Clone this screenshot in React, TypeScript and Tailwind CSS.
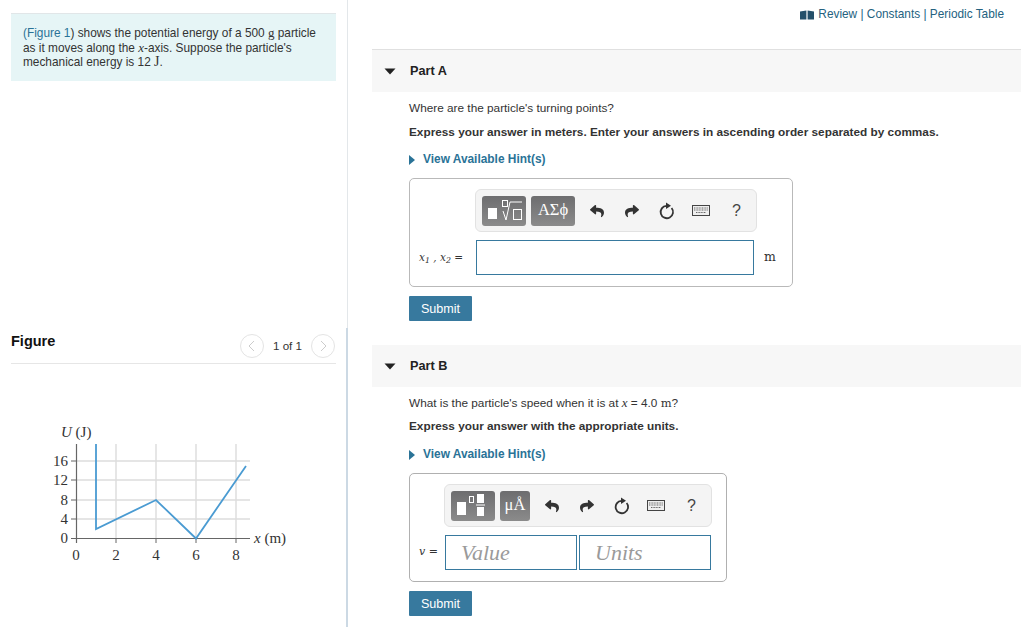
import React from "react";
import { FaReply, FaShare } from "react-icons/fa";

const sans = "font-['Liberation_Sans',Arial,sans-serif]";

const Keyboard = () => (
  <svg width="18" height="11" viewBox="0 0 18 11" className="ml-[17px]">
    <rect x="0.5" y="0.5" width="17" height="10" fill="#eee" stroke="#444" />
    <path d="M2 3h14M2 5h14M4 7.5h10" stroke="#666" strokeWidth="1.2" strokeDasharray="1 .6" />
  </svg>
);

const Reset = () => (
  <svg width="16" height="18" viewBox="0 0 16 18" className="ml-[20px]">
    <path d="M12.6 6A6.2 6.2 0 1 1 7.5 3.8" fill="none" stroke="#333" strokeWidth="1.8" />
    <path d="M7 0.6L12 3.8L7 7Z" fill="#333" />
  </svg>
);

const TemplatesA = () => (
  <svg width="44" height="30" viewBox="0 0 44 30">
    <rect x="6" y="12" width="9" height="11" fill="#fff" />
    <rect x="20.5" y="4.5" width="5" height="6" fill="none" stroke="#fff" />
    <path d="M21 15l3 9 4-18h12" fill="none" stroke="#fff" />
    <rect x="31.5" y="13.5" width="8" height="10" fill="none" stroke="#fff" />
  </svg>
);

const TemplatesB = () => (
  <svg width="44" height="30" viewBox="0 0 44 30">
    <rect x="6" y="11" width="9" height="13" fill="#fff" />
    <rect x="18.5" y="5.5" width="4" height="6" fill="none" stroke="#fff" />
    <rect x="26" y="3" width="7" height="9" fill="#fff" />
    <path d="M25 14h9" stroke="#fff" />
    <rect x="26" y="16" width="7" height="9" fill="#fff" />
  </svg>
);

const ToolButton = ({ w, children }: { w: string; children: React.ReactNode }) => (
  <div className={`${w} flex h-[30px] items-center justify-center rounded-[3px] bg-gradient-to-b from-[#6d6d6f] to-[#8b8b8b] text-white`}>
    {children}
  </div>
);

const Toolbar = ({ width, first, second, secondWidth }: { width: string; first: React.ReactNode; second: React.ReactNode; secondWidth: string }) => (
  <div className={`${width} flex h-[43px] items-center rounded-[6px] border border-[#e2e2e2] bg-[#f4f4f4] pl-[6px]`}>
    <ToolButton w="w-[44px]">{first}</ToolButton>
    <div className="ml-[5px]">
      <ToolButton w={secondWidth}>{second}</ToolButton>
    </div>
    <div className="ml-[15px] flex items-center text-[#333]">
      <FaReply size={14} />
      <FaShare size={14} className="ml-[21px]" />
      <Reset />
      <Keyboard />
      <span className={`${sans} ml-[22px] text-[16px] leading-none text-[#444]`}>?</span>
    </div>
  </div>
);

const PartHeader = ({ label }: { label: string }) => (
  <div className="flex h-[42px] items-center bg-[#f7f7f7] pl-[12px]">
    <svg width="12" height="7" viewBox="0 0 12 7">
      <path d="M0.5 0.5H11.5L6 6.5Z" fill="#222" />
    </svg>
    <span className="ml-[14px] pt-[1px] text-[12.7px] font-bold text-[#222]">{label}</span>
  </div>
);

const Hint = () => (
  <div className="mt-[13px] flex h-[16px] items-center text-[11.9px] font-bold text-[#2a7397]">
    <svg width="6" height="10" viewBox="0 0 6 10">
      <path d="M0 0L6 5L0 10Z" fill="#2a7397" />
    </svg>
    <span className="ml-[8px]">View Available Hint(s)</span>
  </div>
);

const SubmitButton = () => (
  <button className="mt-[9px] block h-[25px] w-[63px] rounded-[1px] bg-[#37799e] pt-[1px] text-[12.6px] text-white">Submit</button>
);

const Graph = () => {
  const xs = [116, 156, 196, 236];
  const ys = [461, 480, 500, 519];
  const serif = { fontFamily: "'Liberation Serif', serif" };
  return (
    <svg width="290" height="150" viewBox="10 420 290 150">
      {xs.map((x) => (
        <line key={x} x1={x} x2={x} y1="444" y2="538" stroke="#dcdcdc" strokeWidth="1.4" />
      ))}
      {ys.map((y) => (
        <line key={y} x1="76" x2="250" y1={y} y2={y} stroke="#dcdcdc" strokeWidth="1.4" />
      ))}
      <line x1="76.5" x2="76.5" y1="444" y2="543" stroke="#666" strokeWidth="1.2" />
      <line x1="71" x2="250" y1="538.5" y2="538.5" stroke="#666" strokeWidth="1.2" />
      {ys.map((y) => (
        <line key={y} x1="71" x2="76" y1={y} y2={y} stroke="#666" />
      ))}
      {xs.map((x) => (
        <line key={x} x1={x} x2={x} y1="538" y2="543" stroke="#666" />
      ))}
      <path d="M96 444V529L156 500L196 538.5L246 466" fill="none" stroke="#4a9bd2" strokeWidth="1.8" />
      <g style={serif} fontSize="15" fill="#333">
        <text x="68" y="466" textAnchor="end">16</text>
        <text x="68" y="485" textAnchor="end">12</text>
        <text x="68" y="505" textAnchor="end">8</text>
        <text x="68" y="524" textAnchor="end">4</text>
        <text x="68" y="543" textAnchor="end">0</text>
        <text x="76" y="560" textAnchor="middle">0</text>
        <text x="116" y="560" textAnchor="middle">2</text>
        <text x="156" y="560" textAnchor="middle">4</text>
        <text x="196" y="560" textAnchor="middle">6</text>
        <text x="236" y="560" textAnchor="middle">8</text>
      </g>
      <text x="61" y="437" style={serif} fontSize="15" fill="#333"><tspan fontStyle="italic">U</tspan> (J)</text>
      <text x="254" y="543" style={serif} fontSize="15" fill="#333"><tspan fontStyle="italic">x</tspan> (m)</text>
    </svg>
  );
};

const Pager = () => (
  <div className="flex items-center pr-[1px] text-[11.6px] text-[#333]">
    <span className="flex h-[24px] w-[24px] items-center justify-center rounded-full border border-[#e4e4e4]">
      <svg width="7" height="12" viewBox="0 0 7 12"><path d="M6 1L1 6L6 11" fill="none" stroke="#ccc" /></svg>
    </span>
    <span className="mx-[9px]">1 of 1</span>
    <span className="flex h-[24px] w-[24px] items-center justify-center rounded-full border border-[#e4e4e4]">
      <svg width="7" height="12" viewBox="0 0 7 12"><path d="M1 1L6 6L1 11" fill="none" stroke="#ccc" /></svg>
    </span>
  </div>
);

export default function App() {
  const mathSerif = "font-['DejaVu_Serif',serif]";
  return (
    <div className={`${sans} flex h-[627px] w-[1024px] overflow-hidden bg-white`}>
      <aside className="relative flex h-full w-[348px] flex-col border-r border-[#e3e7ea] pl-[11px] pr-[11px]">
        {/* darker stretch of the divider next to the figure */}
        <div className="absolute -right-[1px] bottom-0 top-[328px] w-[2px] bg-[#ccd9e4]"></div>
        <div className="mt-[13px] h-[68px] border-t border-[#e1e6e8] bg-[#e6f5f6] px-[12px] pt-[12px] text-[11.85px] leading-[14.5px] text-[#333]">
          <span className="text-[#2a7397]">(Figure 1</span>) shows the potential energy of a 500 <span className="font-['Liberation_Serif',serif] text-[13px]">g</span> particle<br />
          as it moves along the <span className="font-['Liberation_Serif',serif] text-[13px] italic">x</span>-axis. Suppose the particle's<br />
          mechanical energy is 12 <span className="font-['Liberation_Serif',serif] text-[14px]">J</span>.
        </div>
        <div className="mt-[248px] flex h-[35px] items-start justify-between border-b border-[#e6e6e6]">
          <span className="mt-[3px] text-[14.5px] font-bold leading-[18px] text-[#111]">Figure</span>
          <div className="mt-[5px]">
            <Pager />
          </div>
        </div>
        <div className="-ml-[1px] mt-[56px]">
          <Graph />
        </div>
      </aside>
      <main className="flex-1 pl-[24px] pr-[3px]">
        <div className="flex h-[29px] items-center justify-end pr-[17px] text-[11.85px] text-[#24627f]">
          <svg width="14" height="10" viewBox="0 0 14 10" className="mr-[4px]">
            <path d="M0 1.5L6.4 0.5V9.5L0 9.5ZM7.6 0.5L14 1.5V9.5L7.6 9.5Z" fill="#24506a" />
          </svg>
          Review | Constants | Periodic Table
        </div>
        <div className="mt-[20px] border-t border-[#e0e0e0]">
          <PartHeader label="Part A" />
        </div>
        <div className="pl-[37px]">
          <p className="mt-[9px] text-[11.8px] leading-[14px] text-[#333]">Where are the particle's turning points?</p>
          <p className="mt-[10px] text-[11.8px] font-bold leading-[14px] text-[#333]">Express your answer in meters. Enter your answers in ascending order separated by commas.</p>
          <Hint />
          <div className="mt-[10px] h-[109px] w-[384px] rounded-[5px] border border-[#b9b9b9] pl-[65px] pt-[10px]">
            <Toolbar
              width="w-[282px]"
              first={<TemplatesA />}
              second={<span className="font-['Liberation_Serif',serif] text-[16.5px]">AΣϕ</span>}
              secondWidth="w-[44px]"
            />
            <div className="relative mt-[8px] flex items-center pl-[1px]">
              <span className={`${mathSerif} absolute -left-[56px] text-[10.5px] italic text-[#333]`}>x<sub>1</sub> , x<sub>2</sub> <span className="not-italic">=</span></span>
              <div className="h-[35px] w-[278px] border border-[#37799e]"></div>
              <span className={`${mathSerif} ml-[10px] text-[12.5px] text-[#333]`}>m</span>
            </div>
          </div>
          <SubmitButton />
        </div>
        <div className="mt-[24px]">
          <PartHeader label="Part B" />
        </div>
        <div className="pl-[37px]">
          <p className="mt-[9px] text-[11.8px] leading-[14px] text-[#333]">What is the particle's speed when it is at <span className="font-['Liberation_Serif',serif] text-[13px] italic">x</span> = 4.0 <span className={`${mathSerif} text-[11.5px]`}>m</span>?</p>
          <p className="mt-[9px] pb-[1px] text-[11.8px] font-bold leading-[14px] text-[#333]">Express your answer with the appropriate units.</p>
          <Hint />
          <div className="mt-[10px] h-[109px] w-[318px] rounded-[5px] border border-[#b0b0b0] pl-[34px] pt-[10px]">
            <Toolbar
              width="w-[268px]"
              first={<TemplatesB />}
              second={<span className="font-['Liberation_Serif',serif] text-[16.5px]">μÅ</span>}
              secondWidth="w-[30px]"
            />
            <div className="relative mt-[8px] flex items-center gap-[2px] pl-[1px]">
              <span className={`${mathSerif} absolute -left-[25px] text-[11px] italic text-[#333]`}>v <span className="not-italic">=</span></span>
              <div className="flex h-[35px] w-[132px] items-center border border-[#37799e] pl-[15px] font-['Liberation_Serif',serif] text-[22px] italic text-[#9a9a9a]">Value</div>
              <div className="flex h-[35px] w-[132px] items-center border border-[#37799e] pl-[15px] font-['Liberation_Serif',serif] text-[22px] italic text-[#9a9a9a]">Units</div>
            </div>
          </div>
          <SubmitButton />
        </div>
      </main>
    </div>
  );
}
